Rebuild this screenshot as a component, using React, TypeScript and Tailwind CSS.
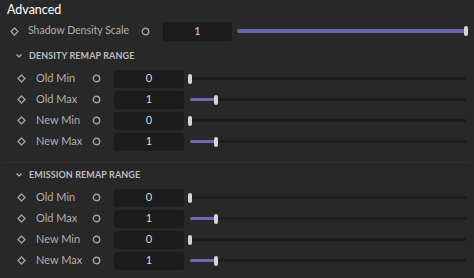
const font = { fontFamily: 'Lato, "Open Sans", sans-serif' };

function Diamond() {
  return (
    <svg width="9" height="9" viewBox="0 0 9 9" className="shrink-0">
      <path d="M4.5 1 L8 4.5 L4.5 8 L1 4.5 Z" fill="none" stroke="#a3a3a3" strokeWidth="1.3" />
    </svg>
  );
}

function Ring() {
  return (
    <svg width="9" height="9" viewBox="0 0 9 9" className="shrink-0">
      <circle cx="4.5" cy="4.5" r="3.2" fill="none" stroke="#a3a3a3" strokeWidth="1.4" />
    </svg>
  );
}

function Chevron() {
  return (
    <svg width="8" height="6" viewBox="0 0 8 6" className="shrink-0">
      <path d="M1.5 1.5 L4 4 L6.5 1.5" fill="none" stroke="#b5b5b5" strokeWidth="1.2" />
    </svg>
  );
}

function Slider({ pct, big }: { pct: number; big?: boolean }) {
  return (
    <div className="relative flex h-full flex-1 items-center">
      <div className="h-[3px] w-full rounded-full bg-[#1c1c1c]" />
      {pct > 0 && (
        <div
          className={`absolute left-0 rounded-full ${big ? "h-[4px] bg-[#6767ad]" : "h-[3px] bg-[#6a6aae]"}`}
          style={{ width: `${pct}%` }}
        />
      )}
      <div
        className="absolute h-[10px] w-[4px] rounded-[2px] bg-[#d4d4d4]"
        style={{ left: `calc(${pct}% - 2px)` }}
      />
    </div>
  );
}

function SubRow({ label, value }: { label: string; value: string }) {
  return (
    <div className="flex h-[21px] items-center">
      <div className="flex w-[36px] justify-end pr-[10px]">
        <Diamond />
      </div>
      <span className="w-[56px] text-[11px] text-[#b0b0b0]">{label}</span>
      <Ring />
      <div className="ml-[13px] flex h-[18px] w-[70px] items-center justify-center rounded-[3px] bg-[#1c1c1c] text-[11px] text-[#d9d9d9]">
        {value}
      </div>
      <div className="ml-[5px] mr-[8px] flex h-full flex-1 pl-[1px]">
        <Slider pct={value === "1" ? 9.5 : 0} />
      </div>
    </div>
  );
}

function Section({ title, rows }: { title: string; rows: [string, string][] }) {
  return (
    <div>
      <div className="flex h-[24px] items-center pl-[15px]">
        <Chevron />
        <span className="ml-[6px] text-[9px] font-bold tracking-[0.1px] text-[#bdbdbd]">{title}</span>
      </div>
      {rows.map(([l, v]) => (
        <SubRow key={l} label={l} value={v} />
      ))}
    </div>
  );
}

const rows: [string, string][] = [
  ["Old Min", "0"],
  ["Old Max", "1"],
  ["New Min", "0"],
  ["New Max", "1"],
];

export default function App() {
  return (
    <div className="h-[278px] w-[474px] overflow-hidden bg-[#282828]" style={font}>
      <div className="flex h-[21px] items-center pl-[7px] text-[12.5px] text-white">Advanced</div>
      <div className="flex h-[20px] items-center">
        <div className="flex w-[28px] justify-end pr-[9px]">
          <Diamond />
        </div>
        <span className="w-[113px] text-[10.5px] text-[#b0b0b0]">Shadow Density Scale</span>
        <Ring />
        <div className="ml-[13px] flex h-[19px] w-[69px] items-center justify-center rounded-[3px] bg-[#1c1c1c] text-[11px] text-[#d9d9d9]">
          1
        </div>
        <div className="ml-[5px] mr-[8px] flex h-full flex-1">
          <Slider pct={100} big />
        </div>
      </div>
      <div className="mt-[3px]">
        <Section title="DENSITY REMAP RANGE" rows={rows} />
      </div>
      <div className="mx-[3px] mt-[10px] h-px bg-[#303030]" />
      <Section title="EMISSION REMAP RANGE" rows={rows} />
    </div>
  );
}
